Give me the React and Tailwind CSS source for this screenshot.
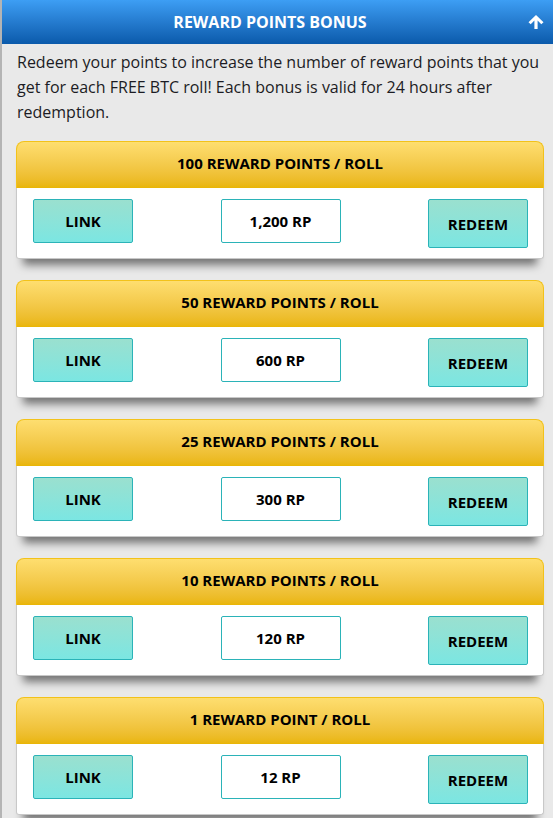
import React from "react";

const cards = [
  { title: "100 REWARD POINTS / ROLL", rp: "1,200 RP" },
  { title: "50 REWARD POINTS / ROLL", rp: "600 RP" },
  { title: "25 REWARD POINTS / ROLL", rp: "300 RP" },
  { title: "10 REWARD POINTS / ROLL", rp: "120 RP" },
  { title: "1 REWARD POINT / ROLL", rp: "12 RP" },
];

function Card({ title, rp }) {
  return (
    <div className="rounded-t-[8px] rounded-b-[3px] shadow-[0_13px_9px_-7px_rgba(0,0,0,0.5)]">
      <div className="h-[47px] rounded-t-[8px] border border-b-0 border-[#f2c21a] bg-gradient-to-b from-[#fede6f] to-[#e9b503] flex items-center justify-center pb-[3px] text-[15px] font-bold text-black">
        {title}
      </div>
      <div className="h-[71px] bg-white border border-t-0 border-[#c8c8c8] rounded-b-[3px] flex items-start justify-between pl-[16px] pr-[15px] pt-[11px]">
        <div className="w-[100px] h-[44px] rounded-[2px] border border-[#2bb3b8] bg-gradient-to-b from-[#9ae0cf] to-[#7be6e2] flex items-center justify-center text-[15px] font-bold text-black">
          LINK
        </div>
        <div className="w-[120px] h-[44px] rounded-[2px] border border-[#2bb3b8] bg-white flex items-center justify-center text-[15px] font-bold text-black">
          {rp}
        </div>
        <div className="w-[100px] h-[49px] rounded-[2px] border border-[#2bb3b8] bg-gradient-to-b from-[#9ae0cf] to-[#7be6e2] flex items-center justify-center pt-[2px] text-[15px] font-bold text-black">
          REDEEM
        </div>
      </div>
    </div>
  );
}

export default function App() {
  return (
    <div
      className="min-h-[818px] w-full bg-[#e9e9e9] border-l-2 border-[#b4b4b4]"
      style={{ fontFamily: '"Open Sans", "Noto Sans", sans-serif' }}
    >
      <div className="relative h-[44px] bg-gradient-to-b from-[#3d9ef4] to-[#0a5aab] flex items-center justify-center pr-[15px] text-white text-[16px] font-bold">
        REWARD POINTS BONUS
        <svg
          className="absolute right-[9px] top-[15px]"
          width="16"
          height="14"
          viewBox="0 0 16 14"
          fill="white"
        >
          <path d="M8 0 L15.5 7.2 L13.3 9.2 L9.6 5.6 L9.6 14 L6.4 14 L6.4 5.6 L2.7 9.2 L0.5 7.2 Z" />
        </svg>
      </div>
      <p className="pl-[15px] pr-[8px] pt-[6px] text-[16px] leading-[25px] text-[#1c1c24]">
        Redeem your points to increase the number of reward points that you get for each FREE BTC roll! Each bonus is valid for 24 hours after redemption.
      </p>
      <div className="pl-[14px] pr-[9px] pt-[16px] flex flex-col gap-[21px] pb-[20px]">
        {cards.map((c) => (
          <Card key={c.title} {...c} />
        ))}
      </div>
    </div>
  );
}
